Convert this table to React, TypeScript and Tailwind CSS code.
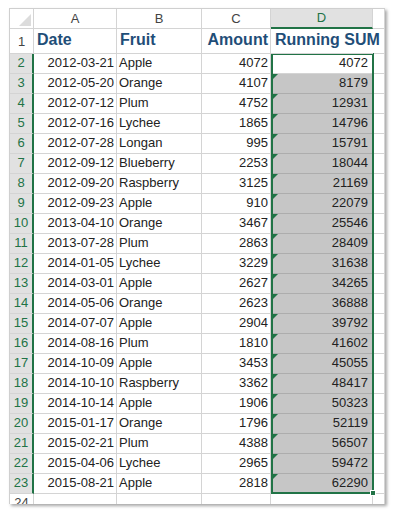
import React from 'react';

const rows: [string, string, number, number][] = [
  ['2012-03-21', 'Apple', 4072, 4072],
  ['2012-05-20', 'Orange', 4107, 8179],
  ['2012-07-12', 'Plum', 4752, 12931],
  ['2012-07-16', 'Lychee', 1865, 14796],
  ['2012-07-28', 'Longan', 995, 15791],
  ['2012-09-12', 'Blueberry', 2253, 18044],
  ['2012-09-20', 'Raspberry', 3125, 21169],
  ['2012-09-23', 'Apple', 910, 22079],
  ['2013-04-10', 'Orange', 3467, 25546],
  ['2013-07-28', 'Plum', 2863, 28409],
  ['2014-01-05', 'Lychee', 3229, 31638],
  ['2014-03-01', 'Apple', 2627, 34265],
  ['2014-05-06', 'Orange', 2623, 36888],
  ['2014-07-07', 'Apple', 2904, 39792],
  ['2014-08-16', 'Plum', 1810, 41602],
  ['2014-10-09', 'Apple', 3453, 45055],
  ['2014-10-10', 'Raspberry', 3362, 48417],
  ['2014-10-14', 'Apple', 1906, 50323],
  ['2015-01-17', 'Orange', 1796, 52119],
  ['2015-02-21', 'Plum', 4388, 56507],
  ['2015-04-06', 'Lychee', 2965, 59472],
  ['2015-08-21', 'Apple', 2818, 62290],
];

const cell = 'border-r border-b border-[#d4d4d4] overflow-hidden whitespace-nowrap';

function Corner() {
  return (
    <svg width="12" height="12" viewBox="0 0 12 12" className="absolute right-[2px] bottom-[2px]">
      <polygon points="12,0 12,12 0,12" fill="#dcdcdc" />
    </svg>
  );
}

export default function App() {
  return (
    <div className="w-[405px] h-[516px] bg-white pt-[8px] pl-[9px]" style={{ fontFamily: '"Liberation Sans", Arial, sans-serif' }}>
      <div className="relative w-[376px] h-[496px] overflow-hidden border-l border-t border-[#cfcfcf] shadow-[2px_2px_3px_rgba(0,0,0,0.35)]">
        <div className="grid grid-cols-[24px_83px_85px_69px_102px_12px] text-[13px] text-[#222]">
          {/* column headers */}
          <div className={`${cell} relative h-[20px] bg-white`}>
            <Corner />
          </div>
          {['A', 'B', 'C'].map((c) => (
            <div key={c} className={`${cell} h-[20px] flex items-center justify-center text-[#444] bg-white`}>
              {c}
            </div>
          ))}
          <div className="h-[20px] flex items-center justify-center text-[#217346] bg-[#e1e1e1] border-r border-[#d4d4d4] border-b-2 border-b-[#217346]">
            D
          </div>
          <div className={`${cell} h-[20px] bg-white`} />

          {/* row 1 */}
          <div className={`${cell} h-[25px] flex items-end justify-center pb-[2px] text-[#444]`}>1</div>
          {['Date', 'Fruit'].map((t) => (
            <div key={t} className={`${cell} h-[25px] flex items-end pl-[3px] pb-[1px] font-bold text-[16px] text-[#1f4e78]`}>
              {t}
            </div>
          ))}
          <div className={`${cell} h-[25px] flex items-end justify-end pr-[2px] pb-[1px] font-bold text-[16px] text-[#1f4e78]`}>
            Amount
          </div>
          <div className="relative z-10 h-[25px] flex items-end pl-[4px] pb-[1px] border-b border-[#d4d4d4] whitespace-nowrap font-bold text-[16px] text-[#1f4e78]">
            Running SUM
          </div>
          <div className={`${cell} h-[25px]`} />

          {rows.map(([date, fruit, amount, sum], i) => {
            const n = i + 2;
            const active = i === 0;
            return (
              <React.Fragment key={n}>
                <div className="h-[20px] flex items-end justify-center pb-[1px] text-[#217346] bg-[#e1e1e1] border-b border-[#d4d4d4] border-r-2 border-r-[#217346]">
                  {n}
                </div>
                <div className={`${cell} h-[20px] flex items-end justify-end pr-[2px] pb-[1px]`}>{date}</div>
                <div className={`${cell} h-[20px] flex items-end pl-[2px] pb-[1px]`}>{fruit}</div>
                <div className={`${cell} h-[20px] flex items-end justify-end pr-[2px] pb-[1px]`}>{amount}</div>
                <div
                  className={`relative h-[20px] flex items-end justify-end pr-[4px] pb-[1px] border-r border-b overflow-hidden ${
                    active ? 'bg-white border-[#d4d4d4]' : 'bg-[#c6c6c6] border-[#adadad]'
                  }`}
                >
                  {!active && (
                    <svg width="5" height="5" viewBox="0 0 5 5" className="absolute left-[2px] top-0">
                      <polygon points="0,0 5,0 0,5" fill="#217346" />
                    </svg>
                  )}
                  {sum}
                </div>
                <div className={`${cell} h-[20px]`} />
              </React.Fragment>
            );
          })}

          {/* row 24, cut off by the sheet's lower edge */}
          <div className={`${cell} h-[20px] flex items-end justify-center pb-[1px] text-[#444]`}>24</div>
          <div className={`${cell} h-[20px]`} />
          <div className={`${cell} h-[20px]`} />
          <div className={`${cell} h-[20px]`} />
          <div className={`${cell} h-[20px]`} />
          <div className={`${cell} h-[20px]`} />
        </div>

        {/* selection outline D2:D23 */}
        <div className="absolute left-[261px] top-[44px] w-[103px] h-[441px] border-2 border-[#217346] pointer-events-none" />
        <div className="absolute left-[360px] top-[481px] w-[6px] h-[6px] bg-[#217346] border border-white" />
      </div>
    </div>
  );
}
